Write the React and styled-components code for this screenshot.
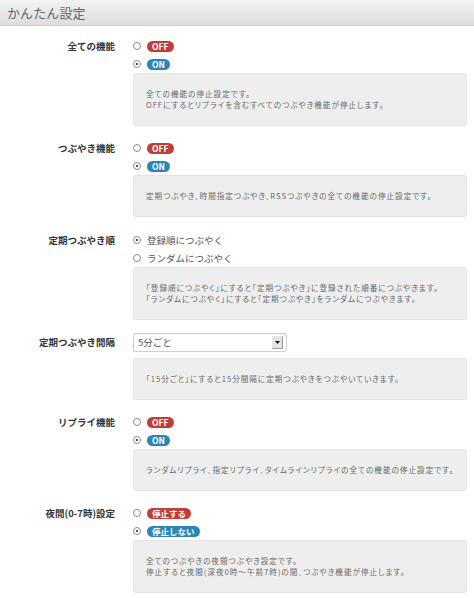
import styled, { createGlobalStyle } from "styled-components";

const GlobalStyle = createGlobalStyle`
  html, body {
    margin: 0;
    padding: 0;
    background: #ffffff;
  }
  body {
    font-family: "Noto Sans CJK JP", "Liberation Sans", sans-serif;
    color: #444444;
  }
`;

const Page = styled.div`
  width: 474px;
  min-height: 598px;
  background: #ffffff;
`;

const Header = styled.div`
  height: 26px;
  display: flex;
  align-items: center;
  padding: 0 7px;
  background: linear-gradient(#f3f3f3, #dddddd);
  border-bottom: 1px solid #d4d4d4;
  box-sizing: border-box;

  h1 {
    margin: 0;
    font-size: 13px;
    font-weight: normal;
    color: #666666;
    letter-spacing: 0.1px;
  }
`;

const Form = styled.div`
  display: flex;
  flex-direction: column;
  gap: 13.3px;
  padding: 11px 7px 0 0;
`;

const Row = styled.div`
  display: grid;
  grid-template-columns: 115px 1fr;
  column-gap: 18px;
`;

const Label = styled.div`
  height: ${(props) => (props.tall ? "19px" : "18px")};
  display: flex;
  align-items: center;
  justify-content: flex-end;
  font-size: 9.5px;
  font-weight: bold;
  color: #333333;
  white-space: nowrap;
`;

const Options = styled.div`
  display: flex;
  flex-direction: column;
`;

const Option = styled.label`
  height: 18px;
  display: flex;
  align-items: center;
  gap: 5px;
  font-size: 9.5px;
  color: #555555;
`;

const Radio = styled.span`
  width: 6px;
  height: 6px;
  border-radius: 50%;
  border: 1px solid #8a8a8a;
  background: #ffffff;
  display: inline-flex;
  align-items: center;
  justify-content: center;
  margin-right: 1px;

  &::after {
    content: "";
    width: 2px;
    height: 2px;
    border-radius: 50%;
    background: ${(props) => (props.checked ? "#222222" : "transparent")};
  }
`;

const Pill = styled.span`
  display: inline-flex;
  align-items: center;
  height: 11px;
  padding: 0 5px;
  border-radius: 6px;
  font-size: 8.5px;
  font-weight: bold;
  color: #ffffff;
  background: ${(props) => (props.on ? "#2b86b6" : "#c23d36")};
`;

const Select = styled.div`
  width: 154px;
  height: 19px;
  box-sizing: border-box;
  border: 1px solid #cfcfcf;
  border-radius: 2px;
  display: flex;
  align-items: center;
  justify-content: space-between;
  padding: 0 3px 0 4px;
  font-size: 9.5px;
  color: #555555;
  margin-bottom: 6px;
  box-shadow: inset 0 1px 1px rgba(0, 0, 0, 0.05);
`;

const Arrow = styled.span`
  width: 11px;
  height: 13px;
  box-sizing: border-box;
  border: 1px solid #9a9a9a;
  border-top-color: #e8e8e8;
  border-left-color: #e8e8e8;
  background: #e4e4e4;
  display: flex;
  align-items: center;
  justify-content: center;
`;

const Note = styled.div`
  background: #eeeeee;
  border: 1px solid #e4e4e4;
  border-radius: 3px;
  padding: 14px 12px 15px;
  font-size: 7.6px;
  line-height: 11px;
  letter-spacing: 1px;
  color: #686868;
  font-feature-settings: "palt";
  white-space: nowrap;
`;

const toggles = [
  {
    label: "全ての機能",
    options: ["OFF", "ON"],
    note: ["全ての機能の停止設定です。", "OFFにするとリプライを含むすべてのつぶやき機能が停止します。"],
  },
  {
    label: "つぶやき機能",
    options: ["OFF", "ON"],
    note: ["定期つぶやき、時間指定つぶやき、RSSつぶやきの全ての機能の停止設定です。"],
  },
];

const ToggleRow = ({ label, options, note, plain }) => (
  <Row>
    <Label>{label}</Label>
    <div>
      <Options>
        {options.map((text, i) => (
          <Option key={text}>
            <Radio checked={i === 0 ? plain : !plain} />
            {plain ? text : <Pill on={i === 1}>{text}</Pill>}
          </Option>
        ))}
      </Options>
      <Note>
        {note.map((line) => (
          <div key={line}>{line}</div>
        ))}
      </Note>
    </div>
  </Row>
);

export default function App() {
  return (
    <Page>
      <GlobalStyle />
      <Header>
        <h1>かんたん設定</h1>
      </Header>
      <Form>
        {toggles.map((t) => (
          <ToggleRow key={t.label} {...t} />
        ))}
        <ToggleRow
          plain
          label="定期つぶやき順"
          options={["登録順につぶやく", "ランダムにつぶやく"]}
          note={[
            "「登録順につぶやく」にすると「定期つぶやき」に登録された順番につぶやきます。",
            "「ランダムにつぶやく」にすると「定期つぶやき」をランダムにつぶやきます。",
          ]}
        />
        <Row>
          <Label tall>定期つぶやき間隔</Label>
          <div>
            <Select>
              <span>5分ごと</span>
              <Arrow>
                <svg width="5" height="3" viewBox="0 0 5 3">
                  <path d="M0 0 L5 0 L2.5 3 Z" fill="#111111" />
                </svg>
              </Arrow>
            </Select>
            <Note>
              <div>「15分ごと」にすると15分間隔に定期つぶやきをつぶやいていきます。</div>
            </Note>
          </div>
        </Row>
        <ToggleRow
          label="リプライ機能"
          options={["OFF", "ON"]}
          note={["ランダムリプライ、指定リプライ、タイムラインリプライの全ての機能の停止設定です。"]}
        />
        <ToggleRow
          label="夜間(0-7時)設定"
          options={["停止する", "停止しない"]}
          note={[
            "全てのつぶやきの夜間つぶやき設定です。",
            "停止すると夜間(深夜0時〜午前7時)の間、つぶやき機能が停止します。",
          ]}
        />
      </Form>
    </Page>
  );
}
